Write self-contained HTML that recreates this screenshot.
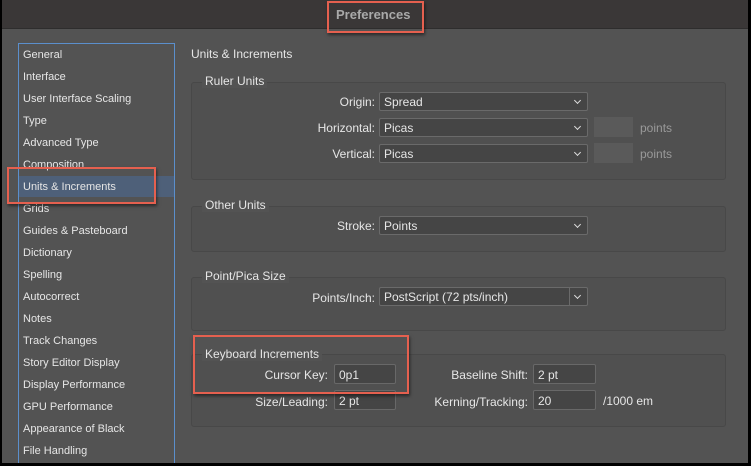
<!DOCTYPE html><html><head><style>
html,body{margin:0;width:751px;height:466px;overflow:hidden}
body{background:#000;position:relative;font-family:"Liberation Sans",sans-serif;color:#e6e6e6;font-size:11px}
.a{position:absolute}
.win{left:2px;top:0;width:746px;height:463px;background:#535353}
.tb{left:2px;top:0;width:746px;height:28px;background:#3a3737;border-bottom:1px solid #2e2d2d}
.red{border:2px solid #e5604f;box-sizing:border-box;box-shadow:1px 2px 3px rgba(0,0,0,.5)}
.side{left:18px;top:43px;width:157px;height:430px;border:1px solid #5b8fcc;box-sizing:border-box}
.it{position:absolute;left:23px;font-size:11px}
.grp{border:1px solid #484848;border-radius:3px;background:#505050}
.gt{position:absolute;font-size:12px;background:#535353;padding:0 3px}
.lbl{position:absolute;text-align:right;font-size:12px}
.dd{position:absolute;height:19px;background:#454545;border:1px solid #6a6a6a;border-radius:2px;box-sizing:border-box;font-size:12px;padding:2px 0 0 4px}
.dd:after{content:"";position:absolute;right:7px;top:5px;width:4px;height:4px;border-right:1px solid #ddd;border-bottom:1px solid #ddd;transform:rotate(45deg)}
.fld{position:absolute;height:20px;background:#454545;border:1px solid #686868;border-radius:2px;box-sizing:border-box;font-size:12px;padding:3px 0 0 4px}
.gf{position:absolute;height:20px;width:39px;background:#5a5a5a}
.pt{position:absolute;color:#9a9a9a;font-size:12px}
.bot{left:0;top:463px;width:751px;height:3px;background:#000}
</style></head><body>
<div class="a win"></div><div class="a tb"></div>
<div class="a" style="left:336px;top:7px;font-weight:bold;font-size:13px;color:#a9a9a9">Preferences</div>
<div class="a red" style="left:327px;top:1px;width:97px;height:32px"></div>
<div class="a" style="left:19px;top:176px;width:156px;height:21px;background:#4e6079"></div>
<div class="a side"></div>
<div class="it" style="top:49px">General</div>
<div class="it" style="top:71px">Interface</div>
<div class="it" style="top:93px">User Interface Scaling</div>
<div class="it" style="top:115px">Type</div>
<div class="it" style="top:137px">Advanced Type</div>
<div class="it" style="top:159px">Composition</div>
<div class="it" style="top:181px">Units &amp; Increments</div>
<div class="it" style="top:203px">Grids</div>
<div class="it" style="top:225px">Guides &amp; Pasteboard</div>
<div class="it" style="top:247px">Dictionary</div>
<div class="it" style="top:269px">Spelling</div>
<div class="it" style="top:291px">Autocorrect</div>
<div class="it" style="top:313px">Notes</div>
<div class="it" style="top:335px">Track Changes</div>
<div class="it" style="top:357px">Story Editor Display</div>
<div class="it" style="top:379px">Display Performance</div>
<div class="it" style="top:401px">GPU Performance</div>
<div class="it" style="top:423px">Appearance of Black</div>
<div class="it" style="top:445px">File Handling</div>
<div class="a red" style="left:7px;top:167px;width:149px;height:37px"></div>
<div class="a" style="left:191px;top:47px;font-size:12px">Units &amp; Increments</div>
<div class="a grp" style="left:191px;top:82px;width:533px;height:96px"></div>
<div class="gt" style="left:202px;top:74px">Ruler Units</div>
<div class="lbl" style="left:250px;width:125px;top:95px">Origin:</div>
<div class="lbl" style="left:250px;width:125px;top:121px">Horizontal:</div>
<div class="lbl" style="left:250px;width:125px;top:147px">Vertical:</div>
<div class="dd" style="left:379px;top:92px;width:209px">Spread</div>
<div class="dd" style="left:379px;top:118px;width:209px">Picas</div>
<div class="dd" style="left:379px;top:144px;width:209px">Picas</div>
<div class="gf" style="left:594px;top:117px"></div><div class="gf" style="left:594px;top:143px"></div>
<div class="pt" style="left:640px;top:121px">points</div><div class="pt" style="left:640px;top:147px">points</div>
<div class="a grp" style="left:191px;top:206px;width:533px;height:44px"></div>
<div class="gt" style="left:202px;top:198px">Other Units</div>
<div class="lbl" style="left:250px;width:125px;top:219px">Stroke:</div>
<div class="dd" style="left:379px;top:216px;width:209px">Points</div>
<div class="a grp" style="left:191px;top:277px;width:533px;height:52px"></div>
<div class="gt" style="left:202px;top:269px">Point/Pica Size</div>
<div class="lbl" style="left:250px;width:125px;top:291px">Points/Inch:</div>
<div class="dd" style="left:379px;top:287px;width:209px">PostScript (72 pts/inch)</div>
<div class="a" style="left:569px;top:288px;width:1px;height:17px;background:#6a6a6a"></div>
<div class="a grp" style="left:191px;top:354px;width:533px;height:71px"></div>
<div class="gt" style="left:202px;top:347px">Keyboard Increments</div>
<div class="lbl" style="left:200px;width:128px;top:368px">Cursor Key:</div>
<div class="lbl" style="left:200px;width:128px;top:395px">Size/Leading:</div>
<div class="fld" style="left:334px;top:364px;width:62px">0p1</div>
<div class="fld" style="left:334px;top:390px;width:62px">2 pt</div>
<div class="lbl" style="left:400px;width:128px;top:368px">Baseline Shift:</div>
<div class="lbl" style="left:400px;width:128px;top:395px">Kerning/Tracking:</div>
<div class="fld" style="left:533px;top:364px;width:63px">2 pt</div>
<div class="fld" style="left:533px;top:390px;width:63px">20</div>
<div class="a" style="left:603px;top:394px;font-size:12px">/1000 em</div>
<div class="a red" style="left:193px;top:335px;width:216px;height:59px"></div>
<div class="a bot"></div>
</body></html>
